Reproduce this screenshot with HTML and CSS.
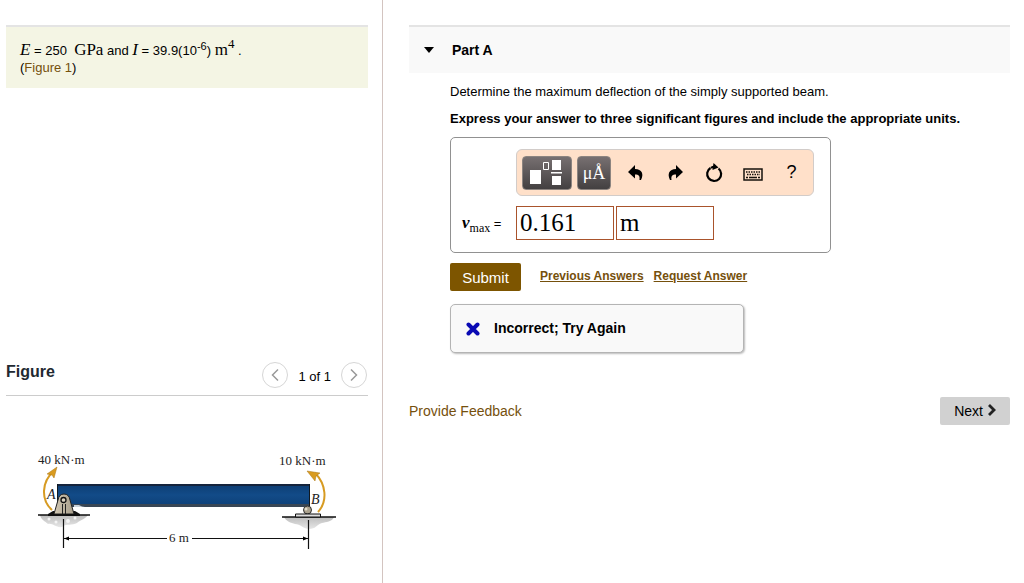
FILE: index.html
```html
<!DOCTYPE html>
<html lang="en">
<head>
<meta charset="utf-8">
<meta name="viewport" content="width=device-width, initial-scale=1">
<title>Part A</title>
<link rel="stylesheet" href="styles.css">
</head>
<body>
<div class="page">
  <aside class="side">
    <section class="given">
      <p class="given-line"><span class="math"><i>E</i></span> = 250 &nbsp;<span class="math">GPa</span> and <span class="math"><i>I</i></span> = 39.9(10<sup>-6</sup>) <span class="math">m<sup>4</sup></span> .</p>
      <p class="given-line">(<a href="#figure">Figure 1</a>)</p>
    </section>
    <section class="figure" id="figure">
      <header class="figure-head">
        <h2 class="figure-title">Figure</h2>
        <nav class="pager" aria-label="Figures">
          <button class="round" type="button" aria-label="Previous figure"><svg width="10" height="14" viewBox="0 0 10 14"><path d="M8 1.500 2.500 7 8 12.500"/></svg></button>
          <span>1 of 1</span>
          <button class="round" type="button" aria-label="Next figure"><svg width="10" height="14" viewBox="0 0 10 14"><path d="M2 1.500 7.500 7 2 12.500"/></svg></button>
        </nav>
      </header>
      <svg class="beam" viewBox="0 0 362 170" role="img" aria-label="Simply supported beam, 6 m long">
        <defs>
          <linearGradient id="web" x1="0" y1="0" x2="0" y2="1"><stop offset="0" stop-color="#0d3d72"/><stop offset=".5" stop-color="#124b88"/><stop offset="1" stop-color="#0d4078"/></linearGradient>
          <linearGradient id="soil" x1="0" y1="0" x2="0" y2="1"><stop offset="0" stop-color="#bdbdbd"/><stop offset="1" stop-color="#e6e6e6"/></linearGradient>
          <linearGradient id="steel" x1="0" y1="0" x2="1" y2="0"><stop offset="0" stop-color="#d2c8b4"/><stop offset="1" stop-color="#a79e8b"/></linearGradient>
        </defs>
        <path d="M34 119h48c-4 5-8 5-11 8-5 3-10 0-15 4-6 1-9-4-14-3-3-3-7-4-8-9z" fill="url(#soil)"/>
        <path d="M278 121h50c-2 5-8 5-12 6-6 2-6 6-13 6-5 0-9-5-14-5-4-1-9-3-11-7z" fill="url(#soil)"/>
        <g fill="#f4f4f4"><circle cx="43" cy="123" r="1.500"/><circle cx="50" cy="126" r="1.500"/><circle cx="62" cy="125" r="2"/><circle cx="69" cy="122" r="1.500"/></g>
        <path d="M51 88h253v22H51z" fill="url(#web)"/>
        <path d="M51 88h253v2H51z" fill="#15243c"/>
        <path d="M51 108h253v3H51z" fill="#394654"/>
        <path d="M51.500 88v22M303.500 88v23" stroke="#101820" fill="none"/>
        <path d="M68 109h5q3 2 6 2H68z" fill="#c9d2da"/>
        <path d="m42 118 5-3h22l5 3v2H42z" fill="#111"/>
        <path d="m48 118 4-14q1-6 6-6t6 6l4 14z" fill="url(#steel)" stroke="#222"/>
        <circle cx="57.500" cy="104" r="2.500" fill="#d9d1c0" stroke="#111" stroke-width="1.300"/>
        <path d="M56.500 108v10M59.500 108v10" stroke="#222" fill="none"/>
        <g stroke="#111" stroke-width="1.500" fill="none"><path d="M32 119h52M276 121h54"/><path d="M57.500 123v29M302.500 124v29" stroke-width="1.200"/><path d="M58 142.500h103M186 142.500h117" stroke-width="1"/></g>
        <path d="m58 142.500 5-2v4zM302 142.500l-5-2v4z"/>
        <circle cx="301.500" cy="114" r="4" fill="#aaa18d" stroke="#333"/><circle cx="300" cy="113" r="1.500" fill="#e2dbc9"/>
        <path d="M289.500 118h25v3h-25z" fill="#ddd" stroke="#111"/>
        <g fill="none" stroke="#d79b22" stroke-width="2"><path d="M46 114C35 104 35 86 48 75"/><path d="M312 116C322 105 320 88 309 77"/></g>
        <path d="m51 71-3 11-2-3-5-1zM301 75l13 2-4 3-1 5z" fill="#d99b1f" stroke="#aa7719" stroke-width=".5"/>
        <g class="beam-text"><text x="32" y="68">40 kN·m</text><text x="273" y="69">10 kN·m</text><text x="163" y="146">6 m</text><text class="point" x="41" y="103">A</text><text class="point" x="305" y="108">B</text></g>
      </svg>
    </section>
  </aside>
  <main class="main">
    <header class="part">
      <svg width="10" height="6" viewBox="0 0 10 6" aria-hidden="true"><path d="M0 0h10L5 6z"/></svg>
      <h1 class="part-title">Part A</h1>
    </header>
    <form class="problem">
      <p class="question">Determine the maximum deflection of the simply supported beam.</p>
      <p class="question strong">Express your answer to three significant figures and include the appropriate units.</p>
      <div class="answer">
        <div class="toolbar" role="toolbar" aria-label="Equation tools">
          <button class="dark wide" type="button" aria-label="Templates"><svg width="34" height="28" viewBox="0 0 34 28" fill="#fff"><path d="M0 11h11v14H0zM22 1h9v10h-9zM21 13h11v1.500H21zM22 17h9v9h-9z"/><path d="M13.500 3.500h5v7h-5z" fill="none" stroke="#fff"/></svg></button>
          <button class="dark" type="button">μÅ</button>
          <button class="tool" type="button" aria-label="Undo"><svg width="16" height="16" viewBox="0 0 16 16"><path d="M7 0v4c7 0 9 5 6 11h-1.500C12 11 11 9.500 7 9.500v4L0 7z"/></svg></button>
          <button class="tool" type="button" aria-label="Redo"><svg width="16" height="16" viewBox="0 0 16 16"><path d="M9 0v4C2 4 0 9 3 15h1.500C4 11 5 9.500 9 9.500v4L16 7z"/></svg></button>
          <button class="tool" type="button" aria-label="Reset"><svg width="18" height="20" viewBox="0 0 18 20"><path d="M5.500 5a7 7 0 1 0 8 .5M9.500 3.800q-2 0-3.500 1" fill="none" stroke="#000" stroke-width="2.200"/><path d="m8.500 0 5 4.500-6 2.500z"/></svg></button>
          <button class="tool" type="button" aria-label="Keyboard"><svg class="keys" width="20" height="13" viewBox="0 0 20 13"><path d="M1 1h18v11H1z" fill="none" stroke="#17120c" stroke-width="1.500"/><path d="M3 4h14M4 6.500h13" fill="none" stroke="#17120c" stroke-width="1.500" stroke-dasharray="1.500 1"/><path d="M3 9.500h2m1 0h8m1 0h2" fill="none" stroke="#17120c" stroke-width="1.500"/></svg></button>
          <button class="tool help" type="button" aria-label="Help">?</button>
        </div>
        <label class="symbol" for="value"><span class="math"><i>v</i><sub>max</sub></span> =</label>
        <div class="fields">
          <input class="field" id="value" type="text" value="0.161">
          <input class="field" type="text" value="m" aria-label="Units">
        </div>
      </div>
      <div class="actions">
        <button class="submit" type="button">Submit</button>
        <a class="action" href="#previous">Previous Answers</a>
        <a class="action" href="#request">Request Answer</a>
      </div>
      <div class="result" role="status">
        <svg width="14" height="14" viewBox="0 0 14 14" aria-hidden="true"><path d="m2.500 2.500 9 9m0-9-9 9" fill="none" stroke="#0a0ab4" stroke-width="4" stroke-linecap="round"/></svg>
        <span>Incorrect; Try Again</span>
      </div>
    </form>
    <footer class="foot">
      <a class="feedback" href="#feedback">Provide Feedback</a>
      <button class="next" type="button">Next <svg width="9" height="12" viewBox="0 0 9 12"><path d="m2 1 5 5-5 5" fill="none" stroke="#222" stroke-width="2.800"/></svg></button>
    </footer>
  </main>
</div>
</body>
</html>
```
FILE: styles.css
```css
* { box-sizing: border-box; }
body {
  margin: 0;
  font: 13px/17px "Liberation Sans", Arial, sans-serif;
  color: #000;
  background: #fff;
}
p, h1, h2 { margin: 0; }
a { color: #75500c; }
button {
  margin: 0;
  padding: 0;
  border: 0;
  background: none;
  font: inherit;
  color: inherit;
}
sup, sub { font-size: 11px; line-height: 0; }
.math { font-family: "Liberation Serif", "Times New Roman", serif; font-size: 17px; }
.math sup { font-size: 13px; }
.page {
  display: grid;
  grid-template-columns: minmax(0, 383fr) minmax(0, 641fr);
  min-height: 100vh;
}
.side {
  padding: 25px 14px 0 6px;
  border-right: 1px solid #d3c4c0;
}
.given {
  padding: 15px 14px 12px;
  border-top: 2px solid #e4e4e4;
  background: #f4f5e4;
}
.given-line { line-height: 17px; }
.given-line .math { line-height: 15px; }
.given-line a { text-decoration: none; }
.figure { margin-top: 272px; }
.figure-head {
  display: flex;
  justify-content: space-between;
  padding-bottom: 7px;
  border-bottom: 1px solid #ccc;
}
.figure-title {
  padding-top: 3px;
  font-size: 16px;
  line-height: 18px;
  color: #222931;
}
.pager {
  display: flex;
  align-items: center;
  gap: 10px;
  padding: 2px 1px 0 0;
}
.pager span { padding-top: 3px; }
.round {
  display: grid;
  place-items: center;
  width: 26px;
  height: 26px;
  border: 1px solid #d6d6d6;
  border-radius: 50%;
}
.round path { fill: none; stroke: #999; stroke-width: 1.5; }
.beam { display: block; width: 100%; }
.beam-text { font: 13px "Liberation Serif", "Times New Roman", serif; fill: #222; }
.point { font-size: 14px; font-style: italic; }
.main { padding: 25px 14px 0 26px; }
.part {
  display: flex;
  align-items: center;
  gap: 18px;
  min-height: 48px;
  padding: 0 15px;
  border-top: 2px solid #e4e4e4;
  background: #f9f9f9;
}
.part-title { font-size: 14px; line-height: 18px; }
.problem { padding: 10px 0 0 41px; }
.question { margin-bottom: 10px; }
.strong { font-weight: bold; }
.answer {
  display: grid;
  grid-template-columns: 54px 1fr;
  align-items: center;
  row-gap: 10px;
  max-width: 381px;
  padding: 11px 15px 12px 11px;
  border: 1px solid #919191;
  border-radius: 5px;
}
.toolbar {
  grid-column: 2;
  display: flex;
  align-items: center;
  height: 47px;
  max-width: 298px;
  padding: 0 0 0 5px;
  border: 1px solid #d2ccc9;
  border-radius: 6px;
  background: #ffe0c9;
}
.dark {
  display: grid;
  place-items: center;
  flex: none;
  width: 34px;
  height: 34px;
  margin-right: 5px;
  border: 1px solid #8c8480;
  border-radius: 4px;
  background: linear-gradient(#777071, #434041);
  color: #fff;
  font: 18px/24px "Liberation Serif", "Times New Roman", serif;
}
.wide { width: 50px; }
.tool {
  display: grid;
  place-items: center;
  flex: 0 1 39px;
  height: 34px;
}
.keys { margin-top: 4px; }
.help { font-size: 18px; }
.symbol { white-space: nowrap; }
.symbol i { font-weight: bold; }
.symbol sub { font-size: 12px; }
.fields { display: flex; gap: 2px; }
.field {
  width: 98px;
  height: 34px;
  padding: 0 3px;
  border: 1px solid #a9532c;
  border-radius: 0;
  background: #fff;
  color: #000;
  font: 25px/30px "Liberation Serif", "Times New Roman", serif;
}
.actions {
  display: flex;
  align-items: center;
  gap: 10px;
  margin-top: 10px;
}
.submit {
  width: 71px;
  height: 28px;
  margin-right: 9px;
  border-radius: 2px;
  background: #7d5500;
  color: #fff;
  font-size: 15px;
}
.action { padding-bottom: 2px; font-size: 12px; font-weight: bold; }
.result {
  display: flex;
  align-items: center;
  gap: 14px;
  max-width: 294px;
  min-height: 49px;
  margin-top: 13px;
  padding: 0 15px;
  border: 1px solid #b4b4b4;
  border-radius: 5px;
  box-shadow: 1px 1px 2px #bbb;
  background: #f9f9f9;
  font-size: 14px;
  font-weight: bold;
}
.foot {
  display: flex;
  align-items: center;
  justify-content: space-between;
  margin-top: 44px;
  font-size: 14px;
}
.feedback { text-decoration: none; }
.next {
  width: 70px;
  height: 28px;
  border-radius: 2px;
  background: #d1d1d1;
}
```
